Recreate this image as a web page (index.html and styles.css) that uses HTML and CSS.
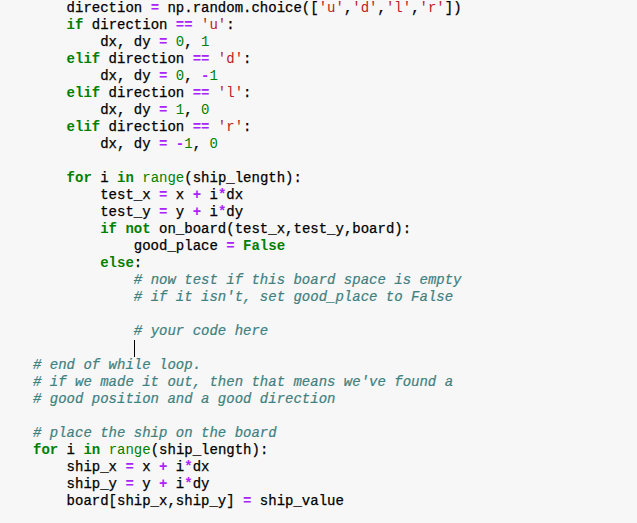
FILE: index.html
```html
<!DOCTYPE html>
<html>
<head>
<meta charset="utf-8">
<link rel="stylesheet" href="styles.css">
</head>
<body>
<div class="cell">
<pre class="code">    direction <span class="o">=</span> np.random.choice([<span class="s">'u'</span>,<span class="s">'d'</span>,<span class="s">'l'</span>,<span class="s">'r'</span>])
    <span class="k">if</span> direction <span class="o">==</span> <span class="s">'u'</span>:
        dx, dy <span class="o">=</span> <span class="n">0</span>, <span class="n">1</span>
    <span class="k">elif</span> direction <span class="o">==</span> <span class="s">'d'</span>:
        dx, dy <span class="o">=</span> <span class="n">0</span>, <span class="o">-</span><span class="n">1</span>
    <span class="k">elif</span> direction <span class="o">==</span> <span class="s">'l'</span>:
        dx, dy <span class="o">=</span> <span class="n">1</span>, <span class="n">0</span>
    <span class="k">elif</span> direction <span class="o">==</span> <span class="s">'r'</span>:
        dx, dy <span class="o">=</span> <span class="o">-</span><span class="n">1</span>, <span class="n">0</span>

    <span class="k">for</span> i <span class="k">in</span> <span class="b">range</span>(ship_length):
        test_x <span class="o">=</span> x <span class="o">+</span> i<span class="o">*</span>dx
        test_y <span class="o">=</span> y <span class="o">+</span> i<span class="o">*</span>dy
        <span class="k">if</span> <span class="k">not</span> on_board(test_x,test_y,board):
            good_place <span class="o">=</span> <span class="k">False</span>
        <span class="k">else</span>:
            <span class="c"># now test if this board space is empty</span>
            <span class="c"># if it isn't, set good_place to False</span>

            <span class="c"># your code here</span>
            <span class="cursor"></span>
<span class="c"># end of while loop.</span>
<span class="c"># if we made it out, then that means we've found a</span>
<span class="c"># good position and a good direction</span>

<span class="c"># place the ship on the board</span>
<span class="k">for</span> i <span class="k">in</span> <span class="b">range</span>(ship_length):
    ship_x <span class="o">=</span> x <span class="o">+</span> i<span class="o">*</span>dx
    ship_y <span class="o">=</span> y <span class="o">+</span> i<span class="o">*</span>dy
    board[ship_x,ship_y] <span class="o">=</span> ship_value
</pre>
</div>
</body>
</html>
```
FILE: styles.css
```css
html, body {
  margin: 0;
  padding: 0;
  background: #f7f7f7;
  height: 100%;
  overflow: hidden;
}
.cell {
  background: #f7f7f7;
  padding: 0 0 0 33px;
}
.code {
  margin: 0;
  font-family: "Liberation Mono", "Courier New", monospace;
  font-size: 14px;
  line-height: 17px;
  color: #000;
  -webkit-text-stroke: 0.25px #000;
}
.k { color: #008000; font-weight: bold; -webkit-text-stroke: 0; }
.o { color: #aa22ff; font-weight: bold; -webkit-text-stroke: 0; }
.s { color: #ba2121; -webkit-text-stroke: 0; }
.n { color: #008000; -webkit-text-stroke: 0; }
.b { color: #008000; -webkit-text-stroke: 0; }
.c { color: #408080; font-style: italic; -webkit-text-stroke: 0.2px #408080; }
.cursor {
  display: inline-block;
  width: 1px;
  height: 17px;
  background: #000;
  vertical-align: top;
}
```
